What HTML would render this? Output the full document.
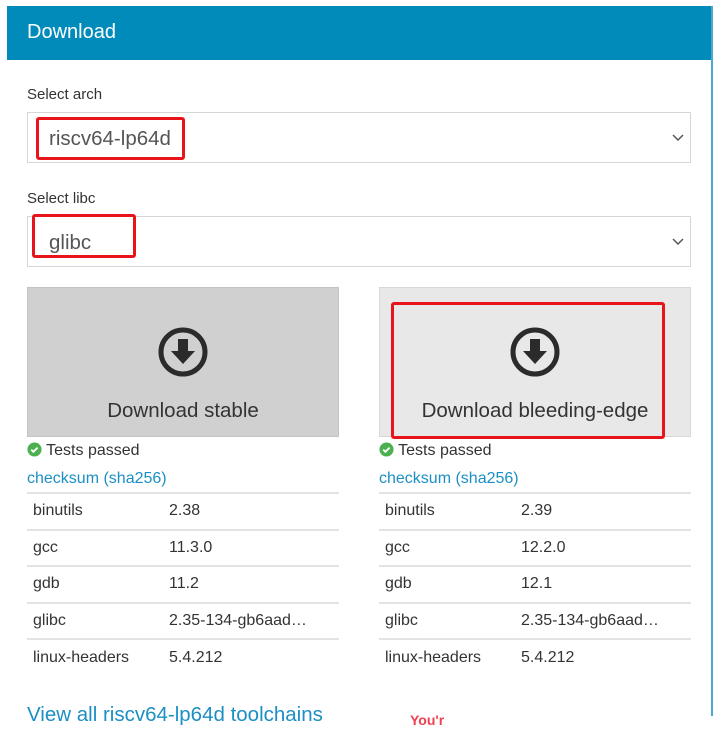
<!DOCTYPE html>
<html><head><meta charset="utf-8"><style>
*{box-sizing:border-box;margin:0;padding:0}
body{width:720px;height:739px;background:#fff;font-family:"Liberation Sans",sans-serif;color:#333;position:relative;overflow:hidden}
.abs{position:absolute}
.hdr{left:7px;top:6px;width:705px;height:54px;background:#008bbb;color:#fff;font-size:20px;line-height:52px;padding-left:20px}
.vline{left:711px;top:6px;width:2px;height:710px;background:#4aa8d0}
.lbl{font-size:15px;color:#333}
.sel{left:27px;width:664px;height:51px;border:1px solid #d6d6d6;font-size:20.5px;color:#555}
.sel span{position:absolute;left:21px;top:14px}
.chev{position:absolute;right:6px;top:18px}
.red{border:3px solid #e8141a;border-radius:3px}
.btn{top:287px;width:312px;height:150px;font-size:20.5px;color:#333;text-align:center}
.btn svg{position:absolute;left:50%;margin-left:-26px;top:38px}
.btn .t{position:absolute;left:0;right:0;top:111px}
.tp{font-size:16px;top:442px}
.ck{font-size:16px;color:#1c8fc4;top:470px}
table{position:absolute;top:492px;width:312px;border-collapse:collapse;font-size:16px}
td{height:36.5px;border-top:2px solid #e3e3e3;padding-left:6px}
td:first-child{width:136px}
</style></head><body>
<div class="abs hdr">Download</div>
<div class="abs vline"></div>
<div class="abs lbl" style="left:27px;top:86px">Select arch</div>
<div class="abs sel" style="top:112px"><span>riscv64-lp64d</span>
<svg class="chev" width="12" height="12" viewBox="0 0 12 12"><path d="M1 4l5 5 5-5" fill="none" stroke="#555" stroke-width="1.5"/></svg></div>
<div class="abs red" style="left:36px;top:117px;width:149px;height:43px"></div>
<div class="abs lbl" style="left:27px;top:190px">Select libc</div>
<div class="abs sel" style="top:216px"><span>glibc</span>
<svg class="chev" width="12" height="12" viewBox="0 0 12 12"><path d="M1 4l5 5 5-5" fill="none" stroke="#555" stroke-width="1.5"/></svg></div>
<div class="abs red" style="left:32px;top:214px;width:104px;height:44px"></div>

<div class="abs btn" style="left:27px;background:#d0d0d0;border:1px solid #c4c4c4">
<svg width="52" height="52" viewBox="0 0 52 52"><circle cx="26" cy="26" r="22" fill="none" stroke="#2b2b2b" stroke-width="5"/><path d="M21 13h10v12h7L26 38 14 25h7z" fill="#2b2b2b"/></svg>
<div class="t">Download stable</div></div>
<div class="abs btn" style="left:379px;background:#e8e8e8;border:1px solid #d8d8d8">
<svg width="52" height="52" viewBox="0 0 52 52"><circle cx="26" cy="26" r="22" fill="none" stroke="#2b2b2b" stroke-width="5"/><path d="M21 13h10v12h7L26 38 14 25h7z" fill="#2b2b2b"/></svg>
<div class="t">Download bleeding-edge</div></div>
<div class="abs red" style="left:391px;top:302px;width:274px;height:137px"></div>

<div class="abs tp" style="left:27px"><svg width="15" height="15" viewBox="0 0 16 16" style="vertical-align:-2px"><circle cx="8" cy="8" r="7.5" fill="#4caf50"/><path d="M4.5 8.2l2.3 2.3 4.5-4.5" fill="none" stroke="#fff" stroke-width="2"/></svg> Tests passed</div>
<div class="abs tp" style="left:379px"><svg width="15" height="15" viewBox="0 0 16 16" style="vertical-align:-2px"><circle cx="8" cy="8" r="7.5" fill="#4caf50"/><path d="M4.5 8.2l2.3 2.3 4.5-4.5" fill="none" stroke="#fff" stroke-width="2"/></svg> Tests passed</div>
<div class="abs ck" style="left:27px">checksum (sha256)</div>
<div class="abs ck" style="left:379px">checksum (sha256)</div>

<table style="left:27px"><tr><td>binutils</td><td>2.38</td></tr><tr><td>gcc</td><td>11.3.0</td></tr><tr><td>gdb</td><td>11.2</td></tr><tr><td>glibc</td><td>2.35-134-gb6aad…</td></tr><tr><td>linux-headers</td><td>5.4.212</td></tr></table>
<table style="left:379px"><tr><td>binutils</td><td>2.39</td></tr><tr><td>gcc</td><td>12.2.0</td></tr><tr><td>gdb</td><td>12.1</td></tr><tr><td>glibc</td><td>2.35-134-gb6aad…</td></tr><tr><td>linux-headers</td><td>5.4.212</td></tr></table>

<div class="abs" style="left:27px;top:703px;font-size:20.5px;color:#1c8fc4">View all riscv64-lp64d toolchains</div>
<div class="abs" style="left:410px;top:712px;font-size:14px;font-weight:bold;color:#f04050">You'r</div>
</body></html>
